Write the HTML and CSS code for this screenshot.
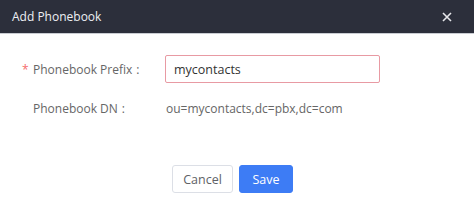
FILE: index.html
```html
<!DOCTYPE html>
<html lang="en">
<head>
  <meta charset="UTF-8" />
  <title>Add Phonebook</title>
  <link rel="stylesheet" href="styles.css">
</head>
<body>
  <div class="dialog">
    <div class="header">
      <span class="title">Add Phonebook</span>
      <span class="close">
        <svg width="10" height="10" viewBox="0 0 10 10"><path d="M1 1L9 9M9 1L1 9" stroke="#e6e7ea" stroke-width="1.6" fill="none"/></svg>
      </span>
    </div>

    <div class="form">
      <div class="row">
        <div class="label"><span class="star">*</span>Phonebook Prefix<span class="colon">:</span></div>
        <div class="field">
          <input class="input" type="text" value="mycontacts" />
        </div>
      </div>
      <div class="row">
        <div class="label"><span class="star"></span>Phonebook DN<span class="colon">:</span></div>
        <div class="field text">ou=mycontacts,dc=pbx,dc=com</div>
      </div>
    </div>

    <div class="footer">
      <button class="btn">Cancel</button>
      <button class="btn primary">Save</button>
    </div>
  </div>
</body>
</html>
```

FILE: styles.css
```css
body {
  margin: 0;
  font-family: 'Open Sans', 'Noto Sans', sans-serif;
  background: #fff;
}
.dialog {
  width: 474px;
  height: 215px;
  overflow: hidden;
}
.header {
  height: 34px;
  background: #2c2f3b;
  border-bottom: 1px solid #c9ccd2;
  display: flex;
  align-items: center;
  justify-content: space-between;
  padding: 0 22px 0 12px;
  box-sizing: border-box;
  color: #eef0f3;
  font-size: 12px;
}
.close {
  display: flex;
  align-items: center;
}
.form {
  padding: 21px 0 0 22px;
}
.row {
  display: flex;
  align-items: center;
  height: 28px;
  margin-bottom: 11px;
}
.label {
  width: 143px;
  font-size: 12px;
  color: #666;
  display: flex;
  align-items: center;
}
.star {
  display: inline-block;
  width: 11px;
  color: #f56c6c;
}
.colon {
  margin-left: 4px;
}
.field {
  font-size: 12px;
}
.field.text {
  color: #666;
  padding-left: 1px;
}
.input {
  width: 215px;
  height: 28px;
  box-sizing: border-box;
  border: 1px solid #e89aa3;
  border-radius: 2px;
  padding: 0 8px;
  font-family: inherit;
  font-size: 12.5px;
  color: #333;
  outline: none;
}
.footer {
  display: flex;
  justify-content: center;
  gap: 6px;
  margin-top: 43px;
  padding-right: 9px;
}
.btn {
  height: 28px;
  width: 61px;
  padding: 0;
  border: 1px solid #dcdfe6;
  border-radius: 3px;
  background: #fff;
  color: #606266;
  font-family: inherit;
  font-size: 12.5px;
}
.btn.primary {
  width: 54px;
  background: #3d7cf5;
  border-color: #3d7cf5;
  color: #fff;
}
```
